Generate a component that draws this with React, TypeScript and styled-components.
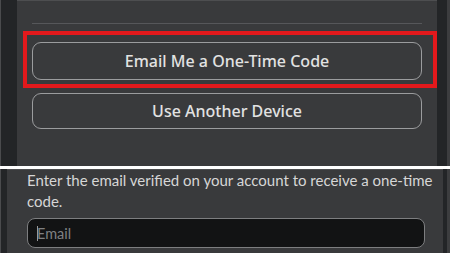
import React from "react";
import styled, { createGlobalStyle } from "styled-components";

const Global = createGlobalStyle`
  html, body {
    margin: 0;
    padding: 0;
    background: #ffffff;
    width: 450px;
    height: 253px;
    overflow: hidden;
  }
  * {
    box-sizing: border-box;
  }
`;

const Page = styled.div`
  display: flex;
  flex-direction: column;
  gap: 3px;
  width: 450px;
  height: 253px;
  background: #ffffff;
  font-family: "Noto Sans", "Open Sans", sans-serif;
`;

const Shot = styled.div<{ $left: number; $right: number; $h: number }>`
  display: grid;
  grid-template-columns: ${(p) => p.$left}px 1fr ${(p) => p.$right}px;
  height: ${(p) => p.$h}px;
  background: #2a2b2d;
  overflow: hidden;
`;

const Strip = styled.div<{ $edge?: "left" | "right" }>`
  background: #232527;
  border-left: ${(p) => (p.$edge === "left" ? "1px solid #4a4b4d" : "none")};
  border-right: ${(p) => (p.$edge === "right" ? "3px solid #3c3d3f" : "none")};
`;

const Panel = styled.div<{ $pad: string }>`
  display: flex;
  flex-direction: column;
  background: #393a3c;
  padding: ${(p) => p.$pad};
  border-top: 1px solid #4d4e50;
`;

const Divider = styled.div`
  height: 1px;
  background: #56575a;
  margin-bottom: 18px;
`;

const Highlight = styled.div`
  position: relative;
  &::after {
    content: "";
    position: absolute;
    top: -11px;
    left: -9px;
    right: -15px;
    bottom: -8px;
    border: 4px solid #e3191c;
    pointer-events: none;
  }
`;

const Button = styled.button<{ $h: number }>`
  display: flex;
  align-items: center;
  justify-content: center;
  width: 100%;
  height: ${(p) => p.$h}px;
  border: 1.5px solid #9b9c9e;
  border-radius: 9px;
  background: #393a3c;
  color: #e2e2e2;
  font-family: "Noto Sans", "Open Sans", sans-serif;
  font-size: 16px;
  font-weight: 500;
  padding: 0;
`;

const Gap = styled.div<{ $h: number }>`
  height: ${(p) => p.$h}px;
`;

const Hint = styled.p`
  margin: 0 0 6px;
  color: #d6d6d6;
  font-family: Lato, "Noto Sans", sans-serif;
  font-size: 15px;
  line-height: 21px;
`;

const Input = styled.input`
  width: 398px;
  height: 30px;
  background: #121314;
  border: 1.5px solid #7d7e80;
  border-radius: 8px;
  color: #e0e0e0;
  font-family: Lato, "Noto Sans", sans-serif;
  font-size: 14.5px;
  padding: 0 9px;
  outline: none;
  &::placeholder {
    color: #7f8082;
  }
`;

const Caret = styled.span`
  position: absolute;
  left: 10px;
  top: 8px;
  width: 1px;
  height: 15px;
  background: #9a9a9a;
`;

const Field = styled.div`
  position: relative;
  width: 398px;
`;

export default function App() {
  return (
    <>
      <Global />
      <Page>
        <Shot $left={17} $right={13} $h={166}>
          <Strip $edge="left" />
          <Panel $pad="22px 15px 0">
            <Divider />
            <Highlight>
              <Button $h={38}>Email Me a One-Time Code</Button>
            </Highlight>
            <Gap $h={13} />
            <Button $h={36}>Use Another Device</Button>
          </Panel>
          <Strip $edge="right" />
        </Shot>
        <Shot $left={7} $right={7} $h={84}>
          <Strip $edge="left" />
          <Panel $pad="0 0 0 20px">
            <Hint>
              Enter the email verified on your account to receive a one-time
              code.
            </Hint>
            <Field>
              <Input placeholder="Email" />
              <Caret />
            </Field>
          </Panel>
          <Strip $edge="right" />
        </Shot>
      </Page>
    </>
  );
}
